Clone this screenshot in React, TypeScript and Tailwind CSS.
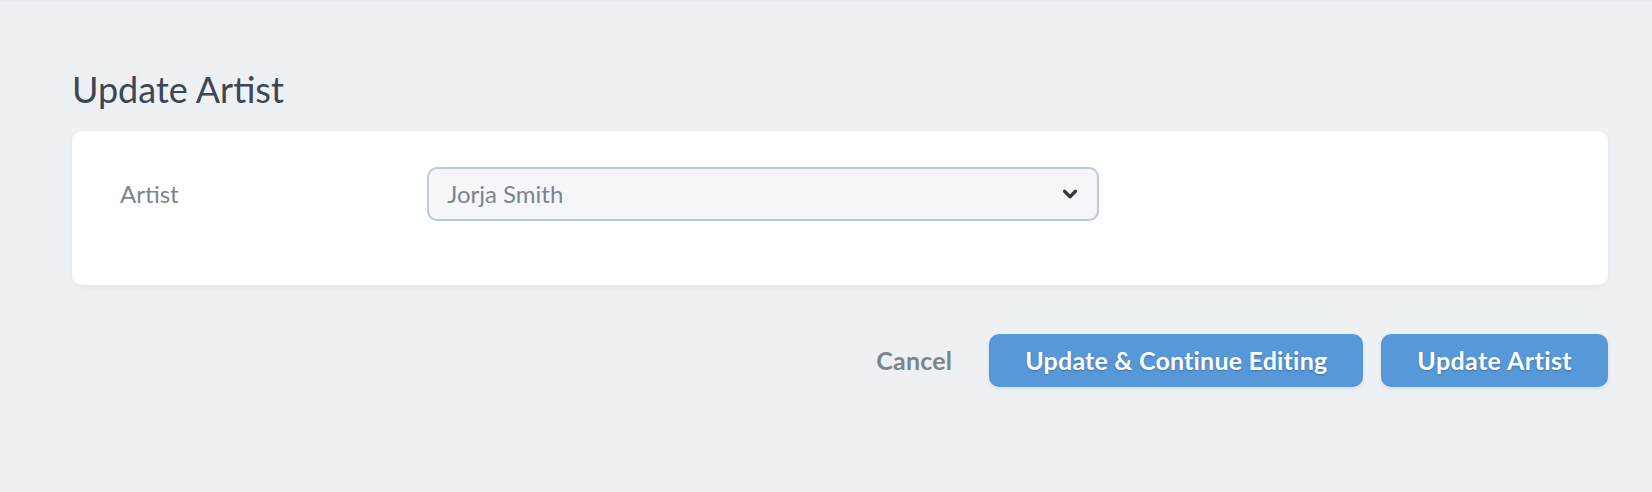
import { ChevronDown } from "lucide-react"

export default function App() {
  return (
    <div className="min-h-[492px] w-[1652px] bg-[#eef1f4] font-['Lato',sans-serif]">
      <div className="h-[3px] bg-gradient-to-b from-[#e2e5ea] to-[#eef1f4]" />
      <div className="w-[1608px] pl-[72px] pt-[62px]">
        <h1 className="mb-[18px] text-[36px] leading-[48px] font-normal text-[#3c4655]">Update Artist</h1>
        <div className="h-[154px] rounded-[10px] bg-white shadow-[0_2px_4px_0_rgba(0,0,0,0.05)]">
          <div className="flex">
            <div className="w-1/5 px-12 py-9">
              <label className="block pt-[12px] text-[24px] leading-[30px] text-[#7c858e]">Artist</label>
            </div>
            <div className="w-1/2 px-12 py-9">
              <div className="flex h-[54px] items-center justify-between rounded-[10px] border-2 border-[#bacad6] bg-[#f4f6fa] pl-[18px] pr-[16px]">
                <span className="text-[24px] text-[#7c858e]">Jorja Smith</span>
                <ChevronDown className="h-[22px] w-[22px] text-[#35393c]" strokeWidth={3.5} />
              </div>
            </div>
          </div>
        </div>
        <div className="mt-[49px] flex items-center justify-end">
          <button className="mr-[37px] text-[25px] font-bold tracking-[0.2px] text-[#7c858e]">Cancel</button>
          <button className="mr-[18px] h-[53px] rounded-[10px] bg-[#5798d9] px-9 text-[25px] font-bold tracking-[0.2px] text-white shadow-[0_2px_4px_0_rgba(0,0,0,0.08)] [text-shadow:0_1px_2px_rgba(0,0,0,0.25)]">
            Update &amp; Continue Editing
          </button>
          <button className="h-[53px] rounded-[10px] bg-[#5798d9] px-9 text-[25px] font-bold tracking-[0.4px] text-white shadow-[0_2px_4px_0_rgba(0,0,0,0.08)] [text-shadow:0_1px_2px_rgba(0,0,0,0.25)]">
            Update Artist
          </button>
        </div>
      </div>
    </div>
  )
}
